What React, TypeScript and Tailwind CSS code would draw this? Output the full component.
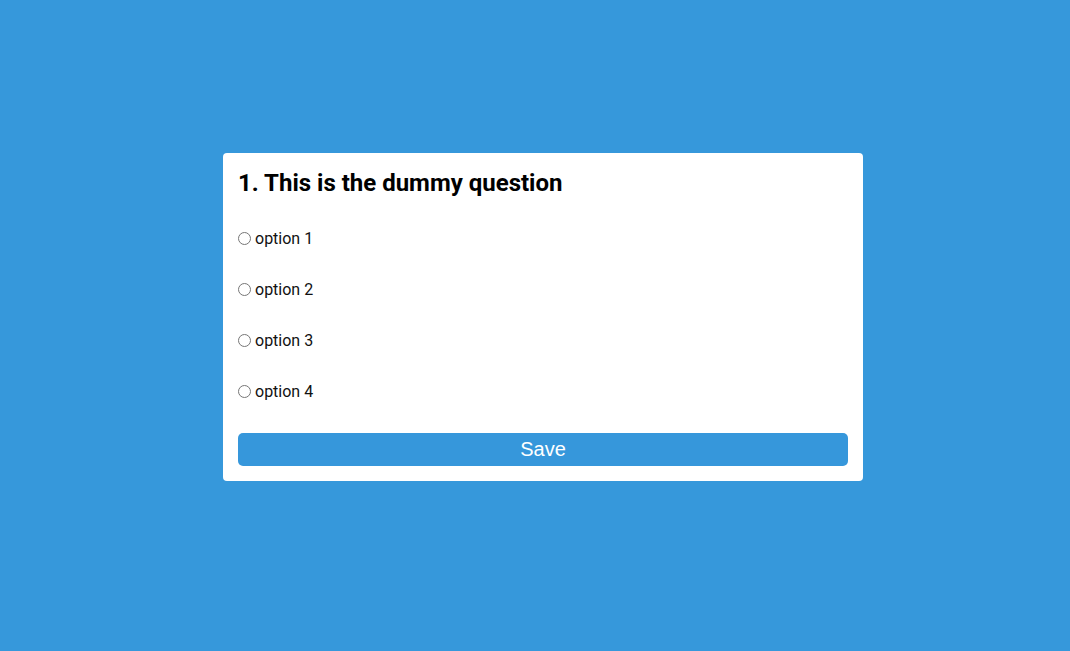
import { useState } from "react"

const options = ["option 1", "option 2", "option 3", "option 4"]

export default function App() {
    const [selected, setSelected] = useState<string | null>(null)

    return (
        <div className="h-screen w-full bg-[#3698db] flex items-center justify-center pl-4 pb-[17px] font-['Roboto',sans-serif]">
            <div className="w-[640px] bg-white rounded-[4px] p-[15px] flex flex-col">
                <h2 className="text-[24px] leading-[30px] font-bold text-black">
                    1. This is the dummy question
                </h2>

                <div className="mt-[29px] flex flex-col gap-[27px]">
                    {options.map((opt) => (
                        <label key={opt} className="flex items-center gap-1 text-base leading-6 text-[#111]">
                            <input
                                type="radio"
                                name="question"
                                className="w-[13px] h-[13px] -mt-0.5"
                                checked={selected === opt}
                                onChange={() => setSelected(opt)}
                            />
                            <span>{opt}</span>
                        </label>
                    ))}
                </div>

                <button className="mt-[29px] h-[33px] w-full bg-[#3697db] text-white rounded-[5px] text-[20px] leading-[31px] font-['Liberation_Sans',Arial,sans-serif]">
                    Save
                </button>
            </div>
        </div>
    )
}
